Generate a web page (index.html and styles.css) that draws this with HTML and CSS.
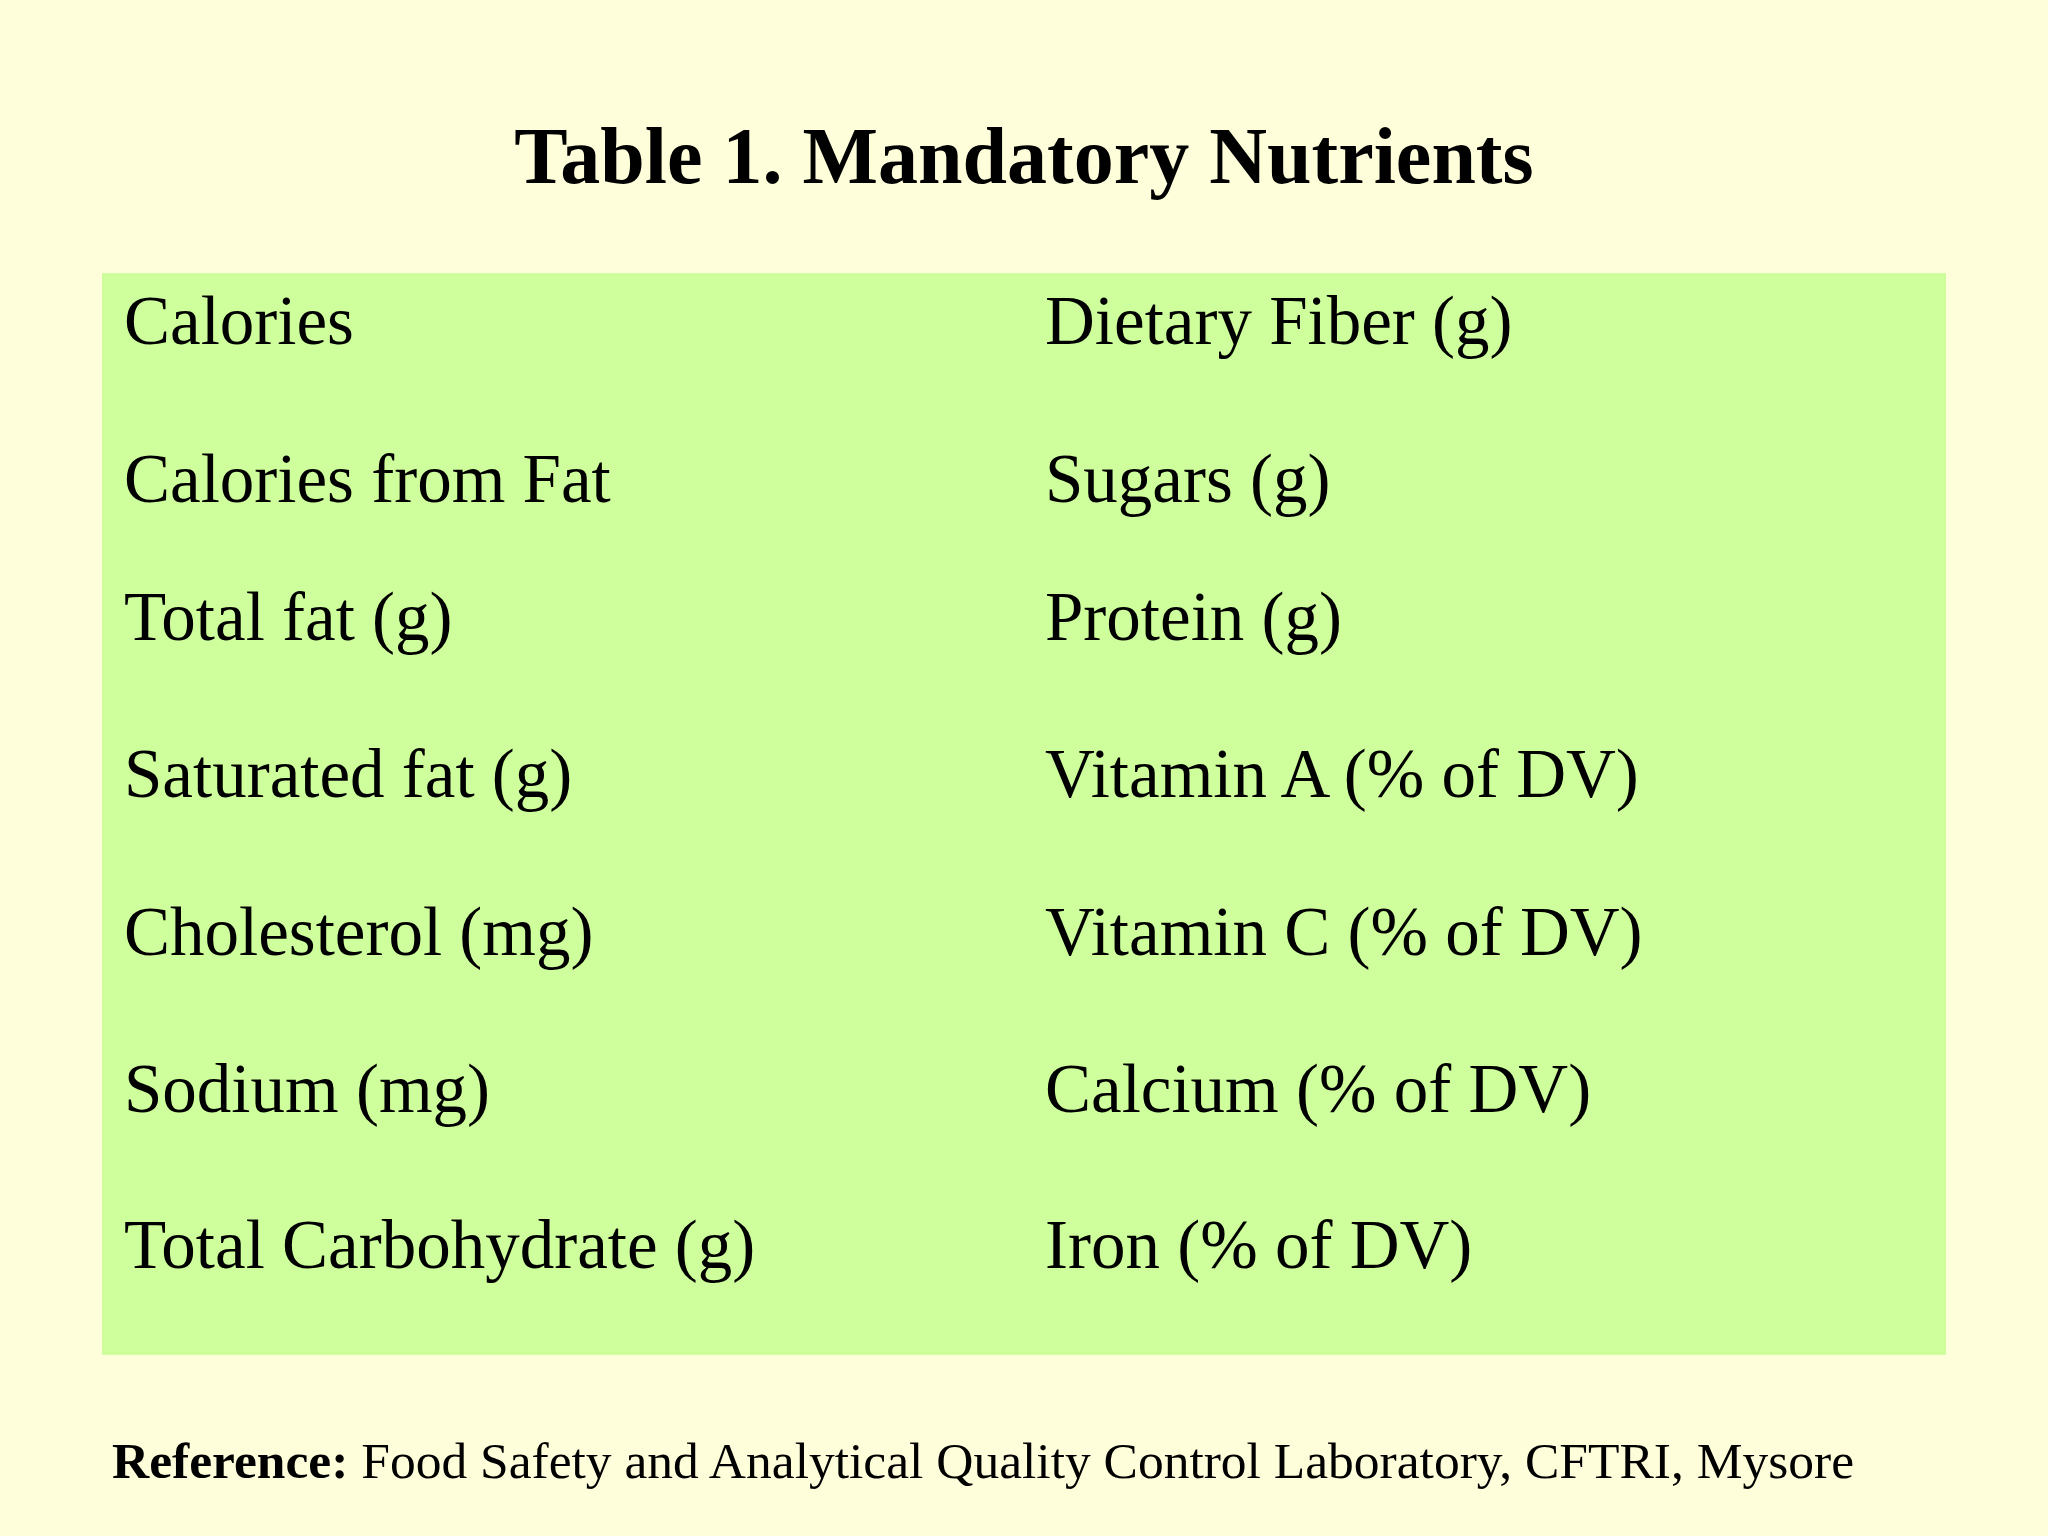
FILE: index.html
```html
<!DOCTYPE html>
<html lang="en">
<head>
<meta charset="utf-8">
<title>Table 1. Mandatory Nutrients</title>
<link rel="stylesheet" href="styles.css">
</head>
<body>
<main class="slide">
  <h1 class="title">Table 1. Mandatory Nutrients</h1>
  <section class="panel">
    <div class="row r1"><span class="cell">Calories</span><span class="cell">Dietary Fiber (g)</span></div>
    <div class="row r2"><span class="cell">Calories from Fat</span><span class="cell">Sugars (g)</span></div>
    <div class="row r3"><span class="cell">Total fat (g)</span><span class="cell">Protein (g)</span></div>
    <div class="row r4"><span class="cell">Saturated fat (g)</span><span class="cell">Vitamin A (% of DV)</span></div>
    <div class="row r5"><span class="cell">Cholesterol (mg)</span><span class="cell">Vitamin C (% of DV)</span></div>
    <div class="row r6"><span class="cell">Sodium (mg)</span><span class="cell">Calcium (% of DV)</span></div>
    <div class="row r7"><span class="cell">Total Carbohydrate (g)</span><span class="cell">Iron (% of DV)</span></div>
  </section>
  <p class="ref"><b>Reference:</b> Food Safety and Analytical Quality Control Laboratory, CFTRI, Mysore</p>
</main>
</body>
</html>
```
FILE: styles.css
```css
html, body {
  margin: 0;
  padding: 0;
  background: #fffedb;
}
body {
  width: 2048px;
  height: 1536px;
  overflow: hidden;
  font-family: "Liberation Serif", "Times New Roman", serif;
  color: #000;
}
.slide {
  display: flex;
  flex-direction: column;
  padding-top: 116px;
}
.title {
  margin: 0;
  font-size: 80px;
  line-height: 1;
  font-weight: bold;
  text-align: center;
}
.panel {
  margin: 77px 102px 0;
  height: 1082px;
  box-sizing: border-box;
  padding: 14px 0 0 22px;
  background: #cfff9c;
  display: flex;
  flex-direction: column;
}
.row {
  display: grid;
  grid-template-columns: 921px 1fr;
  font-size: 69px;
  line-height: 1;
  flex: none;
}
.r1 { height: 158px; }
.r2 { height: 138px; }
.r3 { height: 157px; }
.r4 { height: 158px; }
.r5 { height: 157px; }
.r6 { height: 156px; }
.r7 { height: 69px; }
.cell {
  white-space: nowrap;
}
.ref {
  margin: 80px 0 0;
  padding-left: 112px;
  font-size: 51.5px;
  line-height: 1;
  white-space: nowrap;
}
.ref b {
  font-weight: bold;
}
```
